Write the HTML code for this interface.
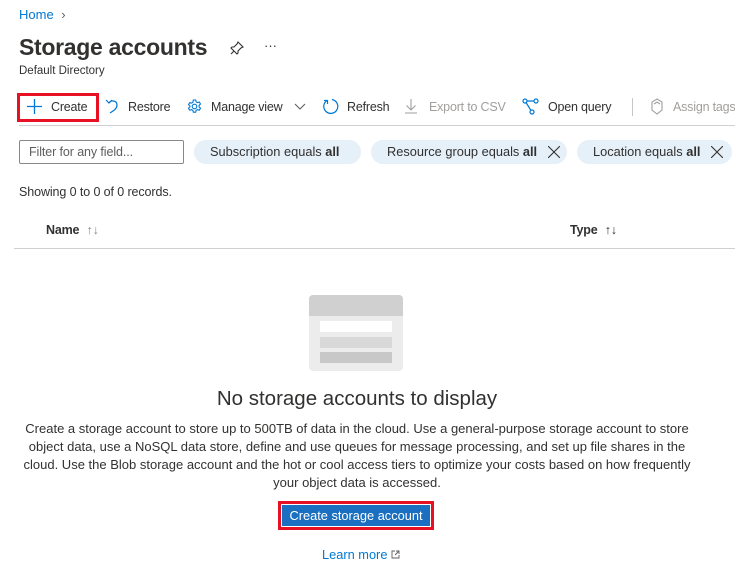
<!DOCTYPE html>
<html><head><meta charset="utf-8"><style>
*{margin:0;padding:0;box-sizing:border-box}
body{width:735px;height:563px;overflow:hidden;background:#fff;font-family:"Liberation Sans",Arial,sans-serif;color:#323130;position:relative}
.a{position:absolute;white-space:nowrap}
.t{font-size:12.5px;letter-spacing:-0.2px}
.pill{position:absolute;top:140px;height:24px;border-radius:12px;background:#e6f0f9;font-size:12.8px;line-height:24px;padding-left:16px;color:#323130;letter-spacing:0}
.pill b{font-weight:bold}
.x{position:absolute;top:6px;width:12px;height:12px}
</style></head><body>
<div class="a" style="left:19px;top:7px;font-size:13px;color:#0078d4">Home <span style="color:#605e5c;margin-left:4px">&#8250;</span></div>
<div class="a" style="left:19px;top:34px;font-size:23px;font-weight:bold;color:#323130;letter-spacing:-0.3px">Storage accounts</div>
<svg class="a" style="left:230px;top:41px" width="14" height="14" viewBox="0 0 14 14" fill="none" stroke="#323130" stroke-width="1.1"><path d="M8 1l5 5-2 1-3 3 0 2-1 1-6-6 1-1 2 0 3-3z M4 10l-3 3"/></svg>
<div class="a" style="left:264px;top:38px;font-size:13px;color:#323130">&middot;&middot;&middot;</div>
<div class="a" style="left:19px;top:65px;font-size:11.5px;color:#323130">Default Directory</div>

<div class="a" style="left:17px;top:93px;width:82px;height:29px;border:3px solid #e81123"></div>
<svg class="a" style="left:27px;top:99px" width="15" height="15" viewBox="0 0 15 15" stroke="#0078d4" stroke-width="1.3"><path d="M7.5 0v15M0 7.5h15"/></svg>
<div class="a t" style="left:51px;top:100px">Create</div>
<svg class="a" style="left:105px;top:98px" width="14" height="16" viewBox="0 0 14 16" fill="none" stroke="#0078d4" stroke-width="1.2"><path d="M1 2l3 3 3-3M4 5C5 2 12 2 12 7c0 4-4 6-7 8"/></svg>
<div class="a t" style="left:128px;top:100px">Restore</div>
<svg class="a" style="left:187px;top:99px" width="15" height="15" viewBox="0 0 15 15" fill="none" stroke="#0078d4" stroke-width="1.1"><circle cx="7.5" cy="7.5" r="2.3"/><path d="M6.3 1h2.4l.4 1.8 1.4.8 1.8-.6 1.2 2-1.4 1.3v1.6l1.4 1.3-1.2 2-1.8-.6-1.4.8-.4 1.8H6.3l-.4-1.8-1.4-.8-1.8.6-1.2-2 1.4-1.3V6.9L1.5 5.6l1.2-2 1.8.6 1.4-.8z"/></svg>
<div class="a t" style="left:211px;top:100px">Manage view</div>
<svg class="a" style="left:294px;top:103px" width="12" height="8" viewBox="0 0 12 8" fill="none" stroke="#605e5c" stroke-width="1.1"><path d="M1 1l5 5 5-5"/></svg>
<svg class="a" style="left:322px;top:98px" width="17" height="17" viewBox="0 0 17 17" fill="none" stroke="#0078d4" stroke-width="1.2"><path d="M5 2.5A7 7 0 1 0 10 1.5M2 2.5h3.5V6"/></svg>
<div class="a t" style="left:347px;top:100px">Refresh</div>
<svg class="a" style="left:405px;top:99px" width="12" height="15" viewBox="0 0 12 15" fill="none" stroke="#a19f9d" stroke-width="1.1"><path d="M6 0v11M1.5 6.5L6 11l4.5-4.5M0 14h12"/></svg>
<div class="a t" style="left:429px;top:100px;color:#a19f9d">Export to CSV</div>
<svg class="a" style="left:522px;top:98px" width="17" height="17" viewBox="0 0 17 17" fill="none" stroke="#0078d4" stroke-width="1.2"><circle cx="3" cy="3" r="2"/><circle cx="14" cy="3" r="2"/><circle cx="10" cy="14" r="2"/><path d="M5 3h7M4 4.5l5 8"/></svg>
<div class="a t" style="left:548px;top:100px">Open query</div>
<div class="a" style="left:632px;top:98px;width:1px;height:18px;background:#c8c6c4"></div>
<svg class="a" style="left:650px;top:98px" width="14" height="17" viewBox="0 0 14 17" fill="none" stroke="#a19f9d" stroke-width="1.1"><path d="M7 1l5 3v8l-5 4-5-4V4z M4 6l3-2 3 2"/></svg>
<div class="a t" style="left:673px;top:100px;color:#a19f9d">Assign tags</div>
<div class="a" style="left:19px;top:125px;width:716px;height:1px;background:#d2d0ce"></div>

<div class="a" style="left:19px;top:140px;width:165px;height:24px;border:1px solid #8a8886;border-radius:2px;font-size:12.5px;line-height:22px;padding-left:9px;color:#605e5c;letter-spacing:-0.1px">Filter for any field...</div>
<div class="pill" style="left:194px;width:167px">Subscription equals <b>all</b></div>
<div class="pill" style="left:371px;width:196px">Resource group equals <b>all</b><svg class="x" style="left:177px" viewBox="0 0 12 12" stroke="#323130" stroke-width="1.1"><path d="M0 0l12 12M12 0L0 12"/></svg></div>
<div class="pill" style="left:577px;width:155px">Location equals <b>all</b><svg class="x" style="left:134px" viewBox="0 0 12 12" stroke="#323130" stroke-width="1.1"><path d="M0 0l12 12M12 0L0 12"/></svg></div>

<div class="a t" style="left:19px;top:185px;letter-spacing:-0.1px">Showing 0 to 0 of 0 records.</div>
<div class="a t" style="left:46px;top:223px;font-weight:600">Name <span style="font-weight:normal;color:#8a8886;margin-left:4px">&#8593;&#8595;</span></div>
<div class="a t" style="left:570px;top:223px;font-weight:600">Type <span style="font-weight:normal;color:#323130;margin-left:4px">&#8593;&#8595;</span></div>
<div class="a" style="left:14px;top:248px;width:721px;height:1px;background:#d2d0ce"></div>

<div class="a" style="left:309px;top:295px;width:94px;height:76px;background:#ececec;border-radius:4px;overflow:hidden">
<div style="height:21px;background:#d0d0d0"></div>
<div class="a" style="left:11px;top:26px;width:72px;height:11px;background:#fff"></div>
<div class="a" style="left:11px;top:42px;width:72px;height:11px;background:#d8d8d8"></div>
<div class="a" style="left:11px;top:57px;width:72px;height:11px;background:#c8c8c8"></div>
</div>

<div class="a" style="left:0;width:714px;top:387px;text-align:center;font-size:20.5px;color:#323130">No storage accounts to display</div>
<div class="a" style="left:7px;width:700px;top:420px;text-align:center;font-size:13px;line-height:18px;white-space:normal;letter-spacing:0;color:#323130">Create a storage account to store up to 500TB of data in the cloud. Use a general-purpose storage account to store<br>object data, use a NoSQL data store, define and use queues for message processing, and set up file shares in the<br>cloud. Use the Blob storage account and the hot or cool access tiers to optimize your costs based on how frequently<br>your object data is accessed.</div>
<div class="a" style="left:278px;top:501px;width:156px;height:29px;border:3px solid #e81123;padding:1px">
<div style="background:#1a6fc0;height:21px;color:#fff;font-size:12.8px;line-height:21px;text-align:center">Create storage account</div></div>
<div class="a" style="left:322px;top:547px;font-size:12.8px;color:#0078d4">Learn more <svg width="9" height="9" viewBox="0 0 9 9" fill="none" stroke="#605e5c" stroke-width="0.9"><path d="M4 1H1v7h7V5M5 1h3v3M8 1L4 5"/></svg></div>
</body></html>
